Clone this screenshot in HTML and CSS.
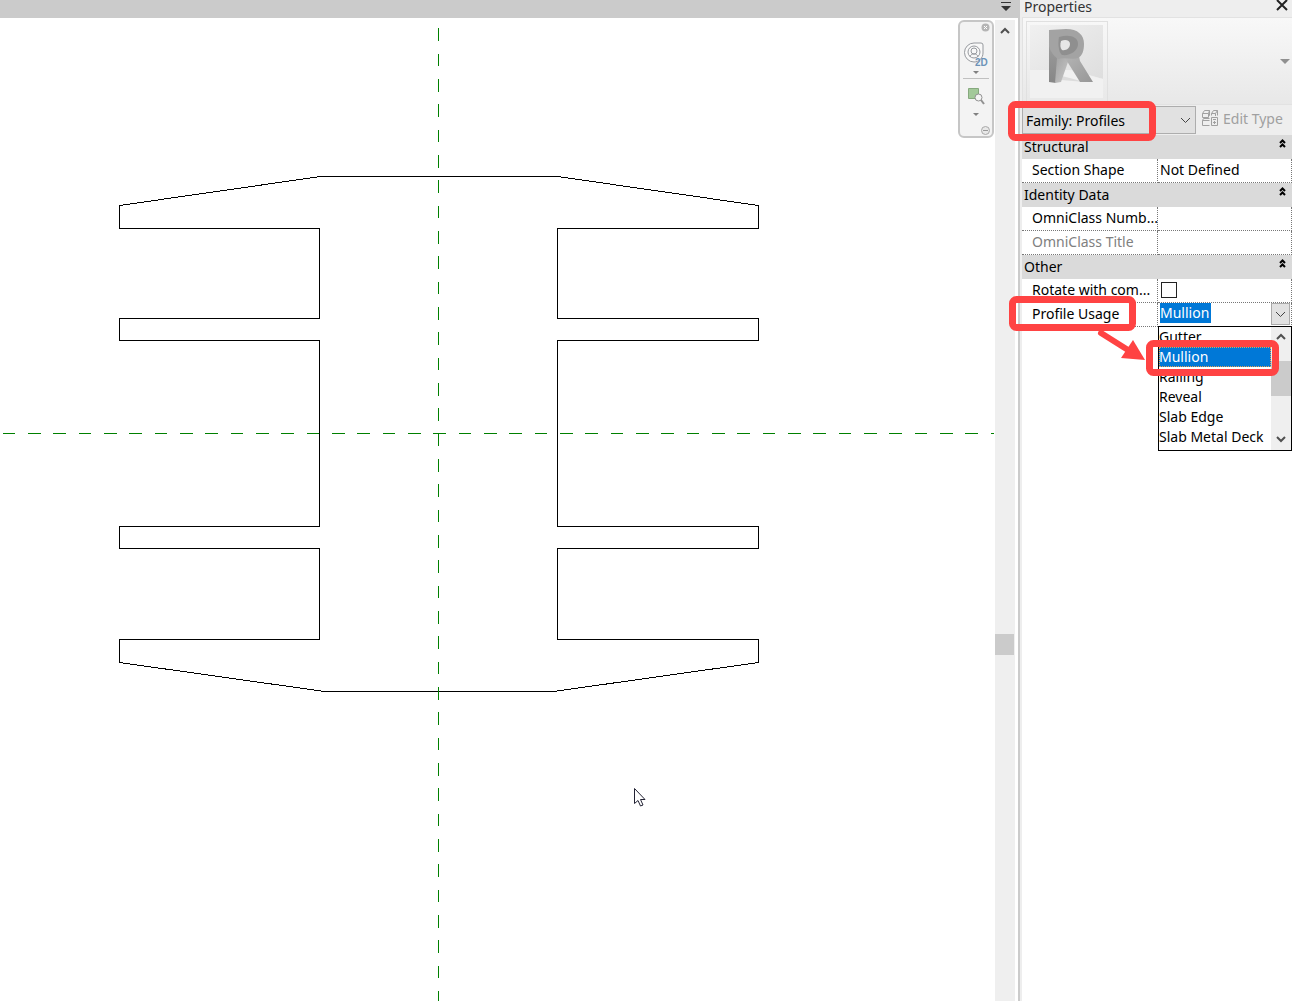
FILE: index.html
```
<!DOCTYPE html>
<html lang="en">
<head>
    <meta charset="UTF-8">
    <meta name="viewport" content="width=device-width, initial-scale=1.0">
    <title>Family Editor - Properties</title>
    <link rel="stylesheet" href="styles.css">
</head>
<body>
    <div class="app">
        <!-- drawing area -->
        <main class="view">
            <div class="tabs">
                <button class="tab-menu" type="button" aria-label="Open views">
                    <svg width="10" height="10" viewBox="0 0 10 10"><path d="M0 1h10v1H0zM0 5h10L5 10z" fill="#333"/></svg>
                </button>
            </div>
            <div class="work">
                <div class="canvas">
                    <svg class="drawing" width="995" height="983" viewBox="0 18 995 983" shape-rendering="crispEdges" fill="none">
                        <!-- profile outline -->
                        <path d="M320.500 176.500H557.500L758.500 205.500V228.500H557.500V318.500H758.500V340.500H557.500V526.500H758.500V548.500H557.500V639.500H758.500V662.500L553.500 691.500H324.500L119.500 662.500V639.500H319.500V548.500H119.500V526.500H319.500V340.500H119.500V318.500H319.500V228.500H119.500V205.500Z" stroke="#000"/>
                        <!-- reference planes -->
                        <path d="M438.500 28V1001" stroke="#008000" stroke-dasharray="13 13 12 13 13 12"/>
                        <path d="M3 433.500H994" stroke="#008000" stroke-dasharray="12 13 13 12 13 13"/>
                    </svg>
                    <!-- navigation bar -->
                    <div class="navbar">
                        <button class="nav-close" type="button" aria-label="Close">
                            <svg width="9" height="9" viewBox="0 0 9 9"><circle cx="4.500" cy="4.500" r="4" fill="#b5b5b5"/><path d="M3 3l3 3M6 3l-3 3" stroke="#fff"/></svg>
                        </button>
                        <button class="nav-wheel" type="button" aria-label="2D wheel">
                            <svg width="26" height="26" viewBox="0 0 26 26" fill="none">
                                <path d="M11 2H18Q20 2 20 4V12C20 17 16 21 11 21A9 9 0 0 1 11 2Z" fill="#f8f8f8" stroke="#96999e"/>
                                <circle cx="11" cy="11" r="6" stroke="#96999e"/>
                                <circle cx="11" cy="10" r="3" stroke="#96999e"/>
                                <path d="M7 16c0-4 8-4 8 0" stroke="#96999e"/>
                                <text class="wheel-text" x="12" y="25">2D</text>
                            </svg>
                        </button>
                        <i class="tri"></i>
                        <hr>
                        <button class="nav-zoom" type="button" aria-label="Zoom">
                            <svg width="18" height="18" viewBox="0 0 18 18" fill="none">
                                <path d="M1.500 1.500h10v10h-10z" fill="#a3c99a" stroke="#86a97e"/>
                                <circle cx="11.500" cy="10.500" r="3.500" fill="#f4f4f4" stroke="#929292"/>
                                <path d="M14 13l3 4" stroke="#929292" stroke-width="2"/>
                            </svg>
                        </button>
                        <i class="tri"></i>
                        <button class="nav-more" type="button" aria-label="Customize">
                            <svg width="9" height="9" viewBox="0 0 9 9"><circle cx="4.500" cy="4.500" r="4" fill="#e8e8e8" stroke="#a8a8a8"/><path d="M2 4.500h5" stroke="#999"/></svg>
                        </button>
                    </div>
                    <!-- mouse pointer -->
                    <svg class="pointer" width="14" height="21" viewBox="0 0 14 21"><path d="M1.500 1.500V16.500L5 13.500L7.500 19L10 18L7.500 12.500H12Z" fill="#fff" stroke="#223"/></svg>
                </div>
                <div class="scroll">
                    <svg width="10" height="7" viewBox="0 0 10 7" fill="none"><path d="M1 6l4-4 4 4" stroke="#505050" stroke-width="2"/></svg>
                    <div class="thumb"></div>
                </div>
            </div>
        </main>

        <!-- properties palette -->
        <aside class="palette">
            <header class="title">
                <h1>Properties</h1>
                <button type="button" aria-label="Close">
                    <svg width="12" height="12" viewBox="0 0 12 12"><path d="M1 0l10 10M11 0L1 10" stroke="#222" stroke-width="2"/></svg>
                </button>
            </header>
            <div class="preview">
                <div class="thumbnail">
                    <svg width="80" height="80" viewBox="0 0 80 80">
                        <defs>
                            <linearGradient id="back" x2="1" y2="1"><stop offset="0" stop-color="#f0f0f0"/><stop offset="1" stop-color="#dedede"/></linearGradient>
                            <linearGradient id="side" y2="1" x2="0"><stop offset="0" stop-color="#a4a4a4"/><stop offset="1" stop-color="#868686"/></linearGradient>
                            <linearGradient id="leg" x2="1" y2="1"><stop offset="0" stop-color="#b4b4b4"/><stop offset="1" stop-color="#979797"/></linearGradient>
                            <linearGradient id="inner" y2="1"><stop offset="0" stop-color="#a0a0a0"/><stop offset="1" stop-color="#cacaca"/></linearGradient>
                        </defs>
                        <path d="M3 3H76V57L45 48H3Z" fill="url(#back)"/>
                        <path d="M3 48H40L76 57V76H3Z" fill="#f1f1f1"/>
                        <path d="M35 54L58 60L34 58Z" fill="#dcdcdc"/>
                        <path d="M22 8L31 36L29 61L22 60Z" fill="url(#side)"/>
                        <path d="M30 36L42 33L41 40L34 60L28 61Z" fill="url(#inner)"/>
                        <path d="M38 36L52 34L53 39L66 60H53Z" fill="url(#leg)"/>
                        <path d="M22 8L39 7C51 7 57 13 57 22C57 29 55 34 51 36C46 38 37 35 31 37C27 34 23 29 22 24Z" fill="#a3a3a3"/>
                        <path d="M32 15C43 12 51 15 51 22C51 29 43 34 35 33C31 30 31 20 32 15Z" fill="#8f8f8f"/>
                        <path d="M34 19C38 17 43 18 43 22C43 26 39 29 35 28C33 26 33 22 34 19Z" fill="#e6e6e6"/>
                    </svg>
                </div>
                <i class="tri big"></i>
            </div>
            <div class="family">
                <select class="family-select" aria-label="Family">
                    <option>Family: Profiles</option>
                </select>
                <button class="edit-type" type="button" disabled>
                    <svg width="17" height="17" viewBox="0 0 17 17" fill="none" stroke="#a0a0a0">
                        <path d="M.5 3.500L2.500 .5H7.500V5.500L6.500 6.500M.5 3.500V7.500H6.500V3.500H.5M6.500 3.500L7.500 .5M9.500 5.500V3.500L11.500 .5H15.500V5.500M9.500 3.500H13.500V6M13.500 3.500L15.500 .5M.5 10.500L1.500 8.500H7.500M.5 10.500V15.500H7.500M.5 10.500H7.500"/>
                        <path d="M9.500 7.500H15.500V15.500H9.500ZM11 9.500H14M11 12.500H14M12.500 11V14"/>
                    </svg>
                    <span>Edit Type</span>
                </button>
            </div>

            <table class="props">
                <colgroup><col class="col-name"><col></colgroup>
                <tbody>
                    <tr class="group"><th colspan="2">Structural<svg class="fold" width="7" height="9" viewBox="0 0 7 9"><path d="M1 4l2.500-2.500L6 4M1 8l2.500-2.500L6 8"/></svg></th></tr>
                    <tr><td>Section Shape</td><td>Not Defined</td></tr>
                    <tr class="group"><th colspan="2">Identity Data<svg class="fold" width="7" height="9" viewBox="0 0 7 9"><path d="M1 4l2.500-2.500L6 4M1 8l2.500-2.500L6 8"/></svg></th></tr>
                    <tr><td>OmniClass Numb...</td><td></td></tr>
                    <tr class="off"><td>OmniClass Title</td><td></td></tr>
                    <tr class="group"><th colspan="2">Other<svg class="fold" width="7" height="9" viewBox="0 0 7 9"><path d="M1 4l2.500-2.500L6 4M1 8l2.500-2.500L6 8"/></svg></th></tr>
                    <tr><td><label for="rotate">Rotate with com...</label></td><td><input id="rotate" type="checkbox"></td></tr>
                    <tr>
                        <td><label for="usage">Profile Usage</label></td>
                        <td>
                            <div class="usage">
                                <select id="usage"><option>Mullion</option></select>
                                <button type="button" aria-label="Show list">
                                    <svg width="11" height="7" viewBox="0 0 11 7" fill="none"><path d="M1 1l4.500 4.500L10 1" stroke="#444"/></svg>
                                </button>
                                <!-- open list -->
                                <div class="list">
                                    <ul role="listbox" aria-label="Profile Usage">
                                        <li role="option">Gutter</li>
                                        <li role="option" class="on" aria-selected="true">Mullion</li>
                                        <li role="option">Railing</li>
                                        <li role="option">Reveal</li>
                                        <li role="option">Slab Edge</li>
                                        <li role="option">Slab Metal Deck</li>
                                    </ul>
                                    <div class="list-scroll">
                                        <svg width="10" height="7" viewBox="0 0 10 7" fill="none"><path d="M1 6l4-4 4 4" stroke="#505050" stroke-width="2"/></svg>
                                        <div class="list-thumb"></div>
                                        <svg width="10" height="7" viewBox="0 0 10 7" fill="none"><path d="M1 1l4 4 4-4" stroke="#505050" stroke-width="2"/></svg>
                                    </div>
                                </div>
                            </div>
                        </td>
                    </tr>
                </tbody>
            </table>

            <!-- red markup -->
            <svg class="marks" width="274" height="400" viewBox="1018 0 274 400" fill="none" stroke="#ff4343" stroke-width="7">
                <rect x="1011.500" y="104.500" width="141" height="33" rx="4"/>
                <rect x="1012.500" y="299.500" width="120" height="28" rx="4"/>
                <rect x="1149.500" y="343.500" width="126" height="29" rx="4"/>
                <path d="M1101 333L1128 350" stroke-width="6" stroke-linecap="round"/>
                <path d="M1133 340L1145 360L1121 358Z" fill="#ff4343" stroke="none"/>
            </svg>
        </aside>
    </div>
</body>
</html>
```

FILE: styles.css
```
*{
    box-sizing: border-box;
}
body{
    margin: 0;
    background-color: #fff;
    color: #000;
    font-family: "Noto Sans", "Open Sans", sans-serif;
    font-size: 14px;
    line-height: 20px;
}
button,select,input{
    margin: 0;
    padding: 0;
    border: 0;
    background: none;
    color: inherit;
    font: inherit;
}
svg{
    display: block;
    flex-shrink: 0;
}
.app{
    display: flex;
    min-height: 100vh;
    overflow: hidden;
}

/* drawing area */
.view{
    flex: 1;
    min-width: 0;
    display: flex;
    flex-direction: column;
}
.tabs{
    display: flex;
    justify-content: flex-end;
    height: 18px;
    padding-right: 7px;
    background-color: #cbcbcb;
}
.tab-menu{
    height: 12px;
}
.work{
    flex: 1;
    display: flex;
}
.canvas{
    position: relative;
    flex: 1;
    min-width: 0;
    overflow: hidden;
}
.navbar{
    position: absolute;
    top: 2px;
    right: 1px;
    width: 36px;
    height: 118px;
    padding: 1px 3px;
    border: 2px solid #c6c6c6;
    border-radius: 6px;
    background-color: #f3f3f3;
    display: flex;
    flex-direction: column;
    align-items: center;
}
.navbar hr{
    width: 26px;
    margin: 4px 0 8px;
    border: 0;
    border-top: 1px solid #c0c0c0;
}
.nav-close,.nav-more{
    align-self: flex-end;
    margin-right: -1px;
}
.nav-wheel{
    margin: 9px 0 4px;
}
.nav-zoom{
    margin-bottom: 8px;
}
.nav-more{
    margin-top: 10px;
}
.wheel-text{
    fill: #6d93b8;
    font: bold 10px "Liberation Sans", sans-serif;
}
.tri{
    border: 3px solid transparent;
    border-top-color: #808080;
    border-bottom: 0;
}
.tri.big{
    border-width: 5px;
    border-top-color: #909090;
    border-bottom: 0;
}
.pointer{
    position: absolute;
    left: 633px;
    top: 769px;
}
.scroll{
    width: 20px;
    margin: 2px 3px 0 0;
    padding-top: 7px;
    background-color: #efefef;
}
.scroll svg{
    margin-left: 5px;
}
.thumb{
    height: 21px;
    margin: 600px 1px 0 0;
    background-color: #cbcbcb;
}

/* properties palette */
.palette{
    position: relative;
    width: 274px;
    border-left: 2px solid #cbcbcb;
    background-color: #fff;
    box-shadow: inset 2px 0 #eee;
}
.title{
    display: flex;
    justify-content: space-between;
    height: 17px;
    padding: 0 4px;
    background-color: #eee;
}
.title h1{
    margin: 0;
    font-size: 14px;
    font-weight: normal;
    line-height: 13px;
    color: #333;
}
.title button{
    height: 12px;
}
.preview{
    display: flex;
    justify-content: space-between;
    align-items: center;
    height: 88px;
    margin-left: 2px;
    padding-right: 2px;
    border: 1px solid #e2e2e2;
    border-right: 0;
    background-image: linear-gradient(#f8f8f8, #e8e8e8);
}
.thumbnail{
    align-self: flex-start;
    width: 82px;
    margin: 3px;
    border: 1px solid #e0e0e0;
}
.family{
    display: flex;
    height: 30px;
    padding: 1px 0 1px 2px;
    background-color: #eee;
}
.family-select{
    appearance: none;
    width: 174px;
    padding: 1px 0 0 3px;
    border: 1px solid #adadad;
    background: #e1e1e1 url('data:image/svg+xml,<svg xmlns="http://www.w3.org/2000/svg" width="11" height="7" fill="none"><path d="M1 1l4.500 4.500L10 1" stroke="%23444"/></svg>') no-repeat right 4px center;
}
.edit-type{
    flex: 1;
    display: flex;
    align-items: center;
    gap: 4px;
    padding: 0 0 3px 6px;
    color: #a0a0a0;
    white-space: nowrap;
}
.props{
    width: 270px;
    margin-left: 2px;
    table-layout: fixed;
    border-collapse: separate;
    border-spacing: 0;
}
.col-name{
    width: 136px;
}
.props td,.props th{
    height: 24px;
    padding: 0 0 0 2px;
    border-right: 1px dotted #777;
    border-bottom: 1px dotted #777;
    font-weight: normal;
    text-align: left;
    white-space: nowrap;
}
.props td{
    padding-bottom: 1px;
}
.props td:first-child{
    padding-left: 10px;
}
.props .group th{
    position: relative;
    border: 0;
    background-color: #dadada;
}
.off{
    color: #808080;
}
.fold{
    position: absolute;
    top: 4px;
    right: 6px;
    fill: none;
    stroke: #000;
    stroke-width: 2;
}
#rotate{
    appearance: none;
    display: block;
    width: 16px;
    height: 16px;
    margin-left: 1px;
    border: 1px solid #222;
}
.usage{
    position: relative;
    display: flex;
    justify-content: space-between;
    height: 22px;
}
.usage select{
    appearance: none;
    width: 51px;
    height: 20px;
    background-color: #0078d7;
    color: #fff;
}
.usage button{
    width: 19px;
    margin-right: 1px;
    padding-left: 3px;
    border: 1px solid #aaa;
    background-color: #e1e1e1;
}
.list{
    position: absolute;
    top: 23px;
    left: -2px;
    width: 134px;
    height: 125px;
    border: 1px solid #000;
    background-color: #fff;
    display: flex;
}
.list ul{
    flex: 1;
    margin: 0;
    padding: 0;
    list-style: none;
}
.list li{
    height: 20px;
}
.list .on{
    background-color: #0078d7;
    outline: 1px dotted #e8a050;
    outline-offset: -1px;
    color: #fff;
}
.list-scroll{
    width: 20px;
    padding: 6px 0 7px;
    background-color: #efefef;
    display: flex;
    flex-direction: column;
    align-items: center;
    justify-content: space-between;
}
.list-thumb{
    align-self: stretch;
    height: 35px;
    margin-bottom: 20px;
    background-color: #cbcbcb;
}
.marks{
    position: absolute;
    top: 0;
    left: -2px;
    overflow: visible;
    pointer-events: none;
}
```
